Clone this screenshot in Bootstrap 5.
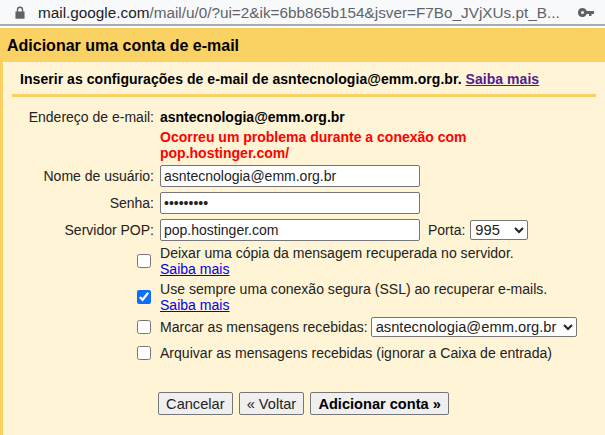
<!DOCTYPE html>
<html lang="pt-BR">
<head>
<meta charset="utf-8">
<title>Adicionar uma conta de e-mail</title>
<link href="https://cdn.jsdelivr.net/npm/bootstrap@5.3.0/dist/css/bootstrap.min.css" rel="stylesheet">
<style>
html,body{height:100%;overflow:hidden}
body{font-family:"Liberation Sans",Arial,sans-serif;font-size:14px;line-height:16px;color:#222;background:#fff;width:605px;height:435px}
.addr-bar{height:26px;background:#f8f9fb;border-bottom:2px solid #a9abae;padding:1px 11px 0 15px;font-size:15.3px;color:#5f6368;white-space:nowrap}
.addr-host{color:#202124}
.addr-url{width:530px;overflow:hidden;margin-left:13px}
.shell{background:#fff4d6;border-left:3px solid #fad163;height:407px;margin-top:2px}
.title-bar{background:#fad163;height:34px;margin-left:-3px;padding:0 0 0 7px;font-size:16px;font-weight:700;color:#000;line-height:36px}
.intro{font-size:14px;font-weight:700;color:#000;padding:9px 0 0 8px;height:35px;letter-spacing:.05px;margin:0 9px;border-bottom:3px solid #fad163;line-height:16px}
.intro a{color:#551a8b}
.form-grid{display:grid;grid-template-columns:148px 1fr;column-gap:6px;padding:0 0 0 3px;margin-top:12px}
.lbl{text-align:right;color:#222}
.val{font-weight:700;color:#000}
.err{font-weight:700;color:#f00;width:320px;margin-top:4px;margin-bottom:4px}
.inp{width:260px;height:22px;border:1px solid #767676;border-radius:2px;background:#fff;padding:0 3px;font:14px "Liberation Sans",sans-serif;color:#222}
.row-gap{margin-bottom:5px;align-items:center}
.lbl-c{display:flex;align-items:center;justify-content:flex-end}
.sel{height:20px;border:1px solid #767676;border-radius:2px;background:#fff;font:14.7px "Liberation Sans",sans-serif;color:#222}
.sel-port{width:58px;margin-left:5px}
.sel-mail{width:206px;margin-left:3px}
.check-list{margin:4px 0 0 134px}
.check-row{display:flex;align-items:center;color:#222;font-size:14.05px}
.check-box{width:14px;height:14px;flex:none;margin:0 9px 0 0;accent-color:#0d6efd}
.more{color:#00e}
.tall{margin-bottom:4px}
.btn-line{display:flex;gap:6px;margin:31px 0 0 155px}
.gbtn{height:23px;border:1px solid #767676;border-radius:2px;background:#efefef;color:#222;font:14.6px "Liberation Sans",sans-serif;padding:0 7.1px}
.gbtn-b{font-weight:700;color:#000}
</style>
</head>
<body>
<div class="addr-bar d-flex align-items-center">
  <svg width="10" height="13" viewBox="0 0 11 14"><path d="M2 6V4a3.500 3.500 0 0 1 7 0v2h1.500v8H.5V6zm1.500 0h4V4a2 2 0 0 0-4 0z" fill="#5f6368"/></svg>
  <div class="addr-url"><span class="addr-host">mail.google.com</span>/mail/u/0/?ui=2&amp;ik=6bb865b154&amp;jsver=F7Bo_JVjXUs.pt_B...</div>
  <svg class="ms-auto" width="16" height="9" viewBox="0 0 16 9"><path d="M4.500 0a4.500 4.500 0 1 0 4.200 6H11v2h2.500V6H16V3H8.700A4.500 4.500 0 0 0 4.500 0zm0 3a1.500 1.500 0 1 1 0 3 1.500 1.500 0 0 1 0-3z" fill="#5f6368"/></svg>
</div>
<div class="shell">
  <div class="title-bar">Adicionar uma conta de e-mail</div>
  <div class="intro">Inserir as configurações de e-mail de asntecnologia@emm.org.br. <a href="#">Saiba mais</a></div>
  <div class="form-grid">
    <div class="lbl">Endereço de e-mail:</div>
    <div class="val">asntecnologia@emm.org.br</div>
    <div></div>
    <div class="err">Ocorreu um problema durante a conexão com pop.hostinger.com/</div>
    <div class="lbl lbl-c row-gap">Nome de usuário:</div>
    <div class="row-gap d-flex"><input class="inp" value="asntecnologia@emm.org.br"></div>
    <div class="lbl lbl-c row-gap">Senha:</div>
    <div class="row-gap d-flex"><input class="inp" type="password" value="123456789"></div>
    <div class="lbl lbl-c">Servidor POP:</div>
    <div class="d-flex align-items-center"><input class="inp" value="pop.hostinger.com"><span class="ms-2">Porta:</span><select class="sel sel-port"><option>995</option></select></div>
  </div>
  <div class="check-list">
    <div class="check-row tall"><input class="check-box" type="checkbox"><div>Deixar uma cópia da mensagem recuperada no servidor.<br><a class="more" href="#">Saiba mais</a></div></div>
    <div class="check-row tall"><input class="check-box" type="checkbox" checked><div>Use sempre uma conexão segura (SSL) ao recuperar e-mails.<br><a class="more" href="#">Saiba mais</a></div></div>
    <div class="check-row tall"><input class="check-box" type="checkbox"><div>Marcar as mensagens recebidas:</div><select class="sel sel-mail"><option>asntecnologia@emm.org.br</option></select></div>
    <div class="check-row mt-2"><input class="check-box" type="checkbox"><div>Arquivar as mensagens recebidas (ignorar a Caixa de entrada)</div></div>
  </div>
  <div class="btn-line">
    <button class="gbtn" type="button">Cancelar</button>
    <button class="gbtn" type="button">« Voltar</button>
    <button class="gbtn gbtn-b" type="button">Adicionar conta »</button>
  </div>
</div>
<script src="https://cdn.jsdelivr.net/npm/bootstrap@5.3.0/dist/js/bootstrap.bundle.min.js"></script>
</body>
</html>
